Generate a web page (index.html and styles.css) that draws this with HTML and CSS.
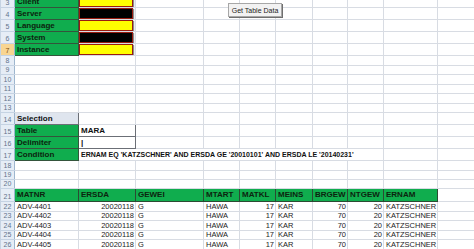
FILE: index.html
```html
<!DOCTYPE html>
<html>
<head>
	<title>SAP Table Reader</title>
	<link rel="stylesheet" href="styles.css">
</head>
<body>
	<div class="sheet">
		<table class="grid">
			<colgroup>
				<col class="c-rh"><col class="c-a"><col class="c-b"><col class="c-c"><col class="c-d"><col class="c-e">
				<col class="c-f"><col class="c-g"><col class="c-h"><col class="c-i"><col class="c-j">
			</colgroup>
			<tr class="h12"><th>3</th><td class="lbl">Client</td><td class="inp"><div class="box yel"></div></td><td></td><td></td><td></td><td></td><td></td><td></td><td></td><td></td></tr>
			<tr class="h12"><th>4</th><td class="lbl">Server</td><td class="inp"><div class="box blk"></div></td><td></td><td></td><td></td><td></td><td></td><td></td><td></td><td></td></tr>
			<tr class="h12"><th>5</th><td class="lbl">Language</td><td class="inp"><div class="box yel"></div></td><td></td><td></td><td></td><td></td><td></td><td></td><td></td><td></td></tr>
			<tr class="h12"><th>6</th><td class="lbl">System</td><td class="inp"><div class="box blk"></div></td><td></td><td></td><td></td><td></td><td></td><td></td><td></td><td></td></tr>
			<tr class="h12"><th class="cur">7</th><td class="lbl">Instance</td><td class="inp"><div class="box yel"></div></td><td></td><td></td><td></td><td></td><td></td><td></td><td></td><td></td></tr>
			<tr class="h10"><th>8</th><td></td><td></td><td></td><td></td><td></td><td></td><td></td><td></td><td></td><td></td></tr>
			<tr class="h9"><th>9</th><td></td><td></td><td></td><td></td><td></td><td></td><td></td><td></td><td></td><td></td></tr>
			<tr class="h10"><th>10</th><td></td><td></td><td></td><td></td><td></td><td></td><td></td><td></td><td></td><td></td></tr>
			<tr class="h9"><th>11</th><td></td><td></td><td></td><td></td><td></td><td></td><td></td><td></td><td></td><td></td></tr>
			<tr class="h10"><th>12</th><td></td><td></td><td></td><td></td><td></td><td></td><td></td><td></td><td></td><td></td></tr>
			<tr class="h9"><th>13</th><td></td><td></td><td></td><td></td><td></td><td></td><td></td><td></td><td></td><td></td></tr>
			<tr class="h12"><th>14</th><td class="sel">Selection</td><td></td><td></td><td></td><td></td><td></td><td></td><td></td><td></td><td></td></tr>
			<tr class="h12"><th>15</th><td class="lbl">Table</td><td class="val">MARA</td><td></td><td></td><td></td><td></td><td></td><td></td><td></td><td></td></tr>
			<tr class="h12"><th>16</th><td class="lbl">Delimiter</td><td class="val">|</td><td></td><td></td><td></td><td></td><td></td><td></td><td></td><td></td></tr>
			<tr class="h12"><th>17</th><td class="lbl">Condition</td><td class="cond" colspan="7">ERNAM EQ 'KATZSCHNER' AND ERSDA GE '20010101' AND ERSDA LE '20140231'</td><td></td><td></td></tr>
			<tr class="h10"><th>18</th><td></td><td></td><td></td><td></td><td></td><td></td><td></td><td></td><td></td><td></td></tr>
			<tr class="h9"><th>19</th><td></td><td></td><td></td><td></td><td></td><td></td><td></td><td></td><td></td><td></td></tr>
			<tr class="h9"><th>20</th><td></td><td></td><td></td><td></td><td></td><td></td><td></td><td></td><td></td><td></td></tr>
			<tr class="h13 head"><th>21</th><td>MATNR</td><td>ERSDA</td><td>GEWEI</td><td>MTART</td><td>MATKL</td><td>MEINS</td><td>BRGEW</td><td>NTGEW</td><td>ERNAM</td><td class="blank"></td></tr>
			<tr class="h10 data"><th>22</th><td>ADV-4401</td><td class="num">20020118</td><td>G</td><td>HAWA</td><td class="num">17</td><td>KAR</td><td class="num">70</td><td class="num">20</td><td>KATZSCHNER</td><td></td></tr>
			<tr class="h9 data"><th>23</th><td>ADV-4402</td><td class="num">20020118</td><td>G</td><td>HAWA</td><td class="num">17</td><td>KAR</td><td class="num">70</td><td class="num">20</td><td>KATZSCHNER</td><td></td></tr>
			<tr class="h10 data"><th>24</th><td>ADV-4403</td><td class="num">20020118</td><td>G</td><td>HAWA</td><td class="num">17</td><td>KAR</td><td class="num">70</td><td class="num">20</td><td>KATZSCHNER</td><td></td></tr>
			<tr class="h9 data"><th>25</th><td>ADV-4404</td><td class="num">20020118</td><td>G</td><td>HAWA</td><td class="num">17</td><td>KAR</td><td class="num">70</td><td class="num">20</td><td>KATZSCHNER</td><td></td></tr>
			<tr class="h10 data"><th>26</th><td>ADV-4405</td><td class="num">20020118</td><td>G</td><td>HAWA</td><td class="num">17</td><td>KAR</td><td class="num">70</td><td class="num">20</td><td>KATZSCHNER</td><td></td></tr>
		</table>
		<button class="getbtn" type="button">Get Table Data</button>
	</div>
</body>
</html>
```

FILE: styles.css
```css
body {
	margin: 0;
	background-color: #FFF;
	overflow: hidden;
	font-family: "Liberation Sans", Arial, sans-serif;
}
.sheet {
	position: relative;
	margin-top: -5px;
}
.grid {
	border-collapse: collapse;
	table-layout: fixed;
	width: 474px;
}
.c-rh { width: 14px; }
.c-a { width: 64px; }
.c-b { width: 57px; }
.c-c { width: 68px; }
.c-d { width: 36px; }
.c-e { width: 36px; }
.c-f { width: 37px; }
.c-g { width: 35px; }
.c-h { width: 36px; }
.c-i { width: 54px; }
.c-j { width: 37px; }
.grid td,
.grid th {
	border: solid 1px #d8dce3;
	padding: 0 0 0 2px;
	overflow: hidden;
	white-space: nowrap;
	font-size: 8px;
	line-height: 8px;
	color: #111;
	vertical-align: bottom;
	text-align: left;
}
.grid th {
	padding: 0;
	text-align: center;
	font-weight: normal;
	font-size: 7px;
	color: #64748c;
	background-color: #e6edf6;
	border-color: #c5d3e3;
	border-right-color: #9eb6ce;
}
.grid th.cur {
	background-color: #f8d592;
	color: #7a4a0c;
}
.h13 { height: 13px; }
.h12 { height: 12px; }
.h10 { height: 10px; }
.h9 { height: 9px; }
.grid td.lbl {
	background-color: #10ad4e;
	border-color: #34553c;
	font-weight: bold;
	color: #0c240f;
	vertical-align: middle;
}
.grid td.sel {
	background-color: #dfe5ee;
	border-color: #6b6f76;
	font-weight: bold;
	vertical-align: middle;
}
.grid td.val {
	border-color: #6b6f76;
	font-weight: bold;
	vertical-align: middle;
}
.grid td.cond {
	overflow: visible;
	font-size: 7px;
	font-weight: bold;
	vertical-align: middle;
}
.grid td.inp {
	padding: 0;
}
.box {
	height: 9px;
	margin: 0 2px 0 0;
	border: solid 1px #9a1c10;
	box-shadow: 1px 1px 1px rgba(0, 0, 0, 0.45);
}
.box.yel {
	background-color: #FFFF00;
}
.box.blk {
	background-color: #000;
}
.head td {
	background-color: #10ad4e;
	border-color: #2c4a33;
	font-weight: bold;
	color: #0c240f;
	vertical-align: middle;
}
.head td.blank {
	background-color: transparent;
	border-color: #d8dce3;
	border-left-color: #2c4a33;
}
.data td {
	font-size: 7.5px;
	line-height: 8px;
	color: #222;
}
.data td.num {
	text-align: right;
	padding: 0 1px 0 0;
}
.getbtn {
	position: absolute;
	top: 8px;
	left: 228px;
	width: 54px;
	height: 14px;
	padding: 0;
	border: solid 1px #a7a7a7;
	border-radius: 0;
	background-color: #f2f2f2;
	box-shadow: 1px 1px 0 #6f6f6f;
	font-family: "Liberation Sans", Arial, sans-serif;
	font-size: 7px;
	color: #222;
}
```
